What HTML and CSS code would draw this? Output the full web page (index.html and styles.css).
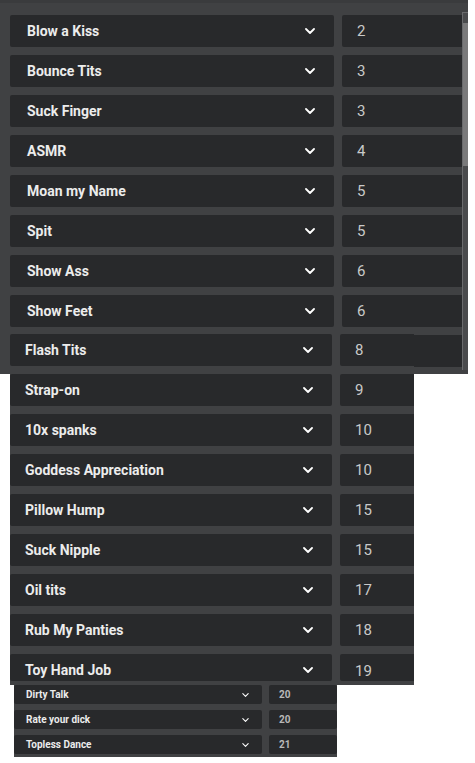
FILE: index.html
```html
<!DOCTYPE html>
<html lang="en">
  <head>
    <meta charset="UTF-8" />
    <meta name="viewport" content="width=device-width, initial-scale=1.0" />
    <title>Tip Menu</title>
    <link rel="stylesheet" href="styles.css">
  </head>
  <body>
    <!-- first capture, with its scrollbar -->
    <section class="shot shot-top">
      <div class="list">
        <div class="row"><div class="pick">Blow a Kiss<svg class="chev" viewBox="0 0 10 6"><polyline points="1,1 5,5 9,1"/></svg></div><div class="price">2</div></div>
        <div class="row"><div class="pick">Bounce Tits<svg class="chev" viewBox="0 0 10 6"><polyline points="1,1 5,5 9,1"/></svg></div><div class="price">3</div></div>
        <div class="row"><div class="pick">Suck Finger<svg class="chev" viewBox="0 0 10 6"><polyline points="1,1 5,5 9,1"/></svg></div><div class="price">3</div></div>
        <div class="row"><div class="pick">ASMR<svg class="chev" viewBox="0 0 10 6"><polyline points="1,1 5,5 9,1"/></svg></div><div class="price">4</div></div>
        <div class="row"><div class="pick">Moan my Name<svg class="chev" viewBox="0 0 10 6"><polyline points="1,1 5,5 9,1"/></svg></div><div class="price">5</div></div>
        <div class="row"><div class="pick">Spit<svg class="chev" viewBox="0 0 10 6"><polyline points="1,1 5,5 9,1"/></svg></div><div class="price">5</div></div>
        <div class="row"><div class="pick">Show Ass<svg class="chev" viewBox="0 0 10 6"><polyline points="1,1 5,5 9,1"/></svg></div><div class="price">6</div></div>
        <div class="row"><div class="pick">Show Feet<svg class="chev" viewBox="0 0 10 6"><polyline points="1,1 5,5 9,1"/></svg></div><div class="price">6</div></div>
        <!-- ninth row sits under the second capture; only its box edge shows -->
        <div class="row"><div class="pick"></div><div class="price"></div></div>
      </div>
      <div class="scrollbar"><div class="thumb"></div></div>
    </section>

    <!-- second capture -->
    <section class="shot shot-mid">
      <div class="list">
        <div class="row"><div class="pick">Flash Tits<svg class="chev" viewBox="0 0 10 6"><polyline points="1,1 5,5 9,1"/></svg></div><div class="price">8</div></div>
        <div class="row"><div class="pick">Strap-on<svg class="chev" viewBox="0 0 10 6"><polyline points="1,1 5,5 9,1"/></svg></div><div class="price">9</div></div>
        <div class="row"><div class="pick">10x spanks<svg class="chev" viewBox="0 0 10 6"><polyline points="1,1 5,5 9,1"/></svg></div><div class="price">10</div></div>
        <div class="row"><div class="pick">Goddess Appreciation<svg class="chev" viewBox="0 0 10 6"><polyline points="1,1 5,5 9,1"/></svg></div><div class="price">10</div></div>
        <div class="row"><div class="pick">Pillow Hump<svg class="chev" viewBox="0 0 10 6"><polyline points="1,1 5,5 9,1"/></svg></div><div class="price">15</div></div>
        <div class="row"><div class="pick">Suck Nipple<svg class="chev" viewBox="0 0 10 6"><polyline points="1,1 5,5 9,1"/></svg></div><div class="price">15</div></div>
        <div class="row"><div class="pick">Oil tits<svg class="chev" viewBox="0 0 10 6"><polyline points="1,1 5,5 9,1"/></svg></div><div class="price">17</div></div>
        <div class="row"><div class="pick">Rub My Panties<svg class="chev" viewBox="0 0 10 6"><polyline points="1,1 5,5 9,1"/></svg></div><div class="price">18</div></div>
        <div class="row last"><div class="pick">Toy Hand Job<svg class="chev" viewBox="0 0 10 6"><polyline points="1,1 5,5 9,1"/></svg></div><div class="price">19</div></div>
      </div>
    </section>

    <!-- third capture, smaller -->
    <section class="shot shot-small">
      <div class="list">
        <div class="row"><div class="pick">Dirty Talk<svg class="chev" viewBox="0 0 10 6"><polyline points="1,1 5,5 9,1"/></svg></div><div class="price">20</div></div>
        <div class="row"><div class="pick">Rate your dick<svg class="chev" viewBox="0 0 10 6"><polyline points="1,1 5,5 9,1"/></svg></div><div class="price">20</div></div>
        <div class="row"><div class="pick">Topless Dance<svg class="chev" viewBox="0 0 10 6"><polyline points="1,1 5,5 9,1"/></svg></div><div class="price">21</div></div>
      </div>
    </section>
  </body>
</html>
```

FILE: styles.css
```css
body {
  margin: 0;
  background: #ffffff;
  font-family: Roboto, "Liberation Sans", sans-serif;
}

.shot {
  background: #404143;
  display: flex;
  box-sizing: border-box;
}

.list {
  display: flex;
  flex-direction: column;
  gap: 8px;
}

.row {
  display: grid;
  gap: 8px;
  height: 32px;
}

.pick {
  background: #28292b;
  border-radius: 2px;
  color: #ececec;
  font-weight: 700;
  font-size: 14px;
  display: flex;
  align-items: center;
  justify-content: space-between;
}

.price {
  background: #28292b;
  border-radius: 2px;
  color: #c9c9c9;
  font-size: 15px;
  display: flex;
  align-items: center;
}

.chev {
  width: 10px;
  height: 6px;
  fill: none;
  stroke: #ffffff;
  stroke-width: 1.8;
  stroke-linecap: round;
  stroke-linejoin: round;
}

/* top capture */
.shot-top {
  width: 468px;
  height: 374px;
  padding: 12px 0 0 10px;
  border-top: 3px solid #3a3b3d;
}
.shot-top .row {
  grid-template-columns: 324px 120px;
}
.shot-top .pick {
  padding: 0 19px 0 17px;
}
.shot-top .price {
  padding-left: 15px;
  border-radius: 2px 0 0 2px;
}

.scrollbar {
  width: 6px;
  margin-top: -3px;
  height: 358px;
  background: #4a4b4d;
  border-left: 1px solid #6a6b6d;
  border-top: 1px solid #6a6b6d;
  box-sizing: border-box;
}
.thumb {
  margin-top: 10px;
  height: 143px;
  background: #7a7a7b;
}

/* middle capture */
.shot-mid {
  width: 404px;
  margin: -46px 0 0 10px;
  padding: 6px 0 4px 0;
  position: relative;
}
.shot-mid .row {
  grid-template-columns: 322px 74px;
}
/* the capture cuts the last row short */
.shot-mid .row.last {
  height: 27px;
}
.shot-mid .row.last .pick,
.shot-mid .row.last .price {
  align-items: flex-start;
  padding-top: 8px;
  box-sizing: border-box;
}
.shot-mid .row.last .chev {
  margin-top: 5px;
}
.shot-mid .pick {
  padding: 0 19px 0 15px;
}
.shot-mid .price {
  padding-left: 15px;
  border-radius: 2px 0 0 2px;
}

/* bottom capture */
.shot-small {
  width: 323px;
  margin-left: 14px;
  padding: 0 0 3px 0;
}
.shot-small .list {
  gap: 6px;
}
.shot-small .row {
  height: 19px;
  grid-template-columns: 248px 68px;
  gap: 7px;
}
.shot-small .pick {
  font-size: 10px;
  padding: 0 13px 0 12px;
}
.shot-small .price {
  font-size: 10px;
  font-weight: 700;
  color: #b8b8b8;
  padding-left: 10px;
}
.shot-small .chev {
  width: 7px;
  height: 4px;
  stroke-width: 1.6;
}
```
